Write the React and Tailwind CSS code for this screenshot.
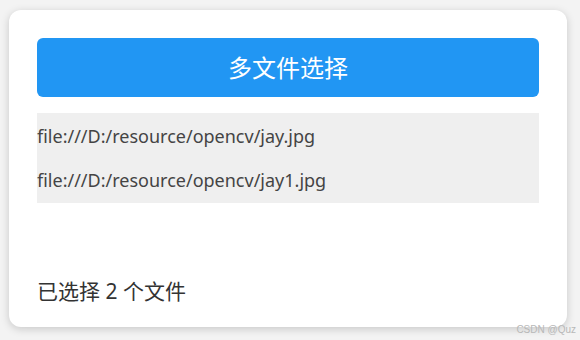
const files = [
  "file:///D:/resource/opencv/jay.jpg",
  "file:///D:/resource/opencv/jay1.jpg",
];

const App = () => {
  return (
    <div className="w-[580px] h-[340px] bg-[#f3f3f3] relative font-['Noto_Sans','Noto_Sans_CJK_SC',sans-serif] overflow-hidden">
      <div className="pl-[9px] pt-[10px]">
        <div className="w-[558px] h-[317px] bg-white rounded-[12px] shadow-[0_2px_8px_rgba(0,0,0,0.18)] px-[28px] pt-[28px] flex flex-col">
          {/* Button */}
          <button className="h-[59px] w-full rounded-[6px] bg-[#2196f3] text-white text-[24px] flex items-center justify-center">
            多文件选择
          </button>

          {/* File list */}
          <div className="mt-[16px] bg-[#efefef] py-[1px]">
            {files.map((f) => (
              <div key={f} className="h-[44px] flex items-center text-[18px] text-[#444]">
                {f}
              </div>
            ))}
          </div>

          {/* Footer */}
          <p className="mt-auto pb-[21px] text-[21px] leading-[30px] text-[#333]">
            已选择 2 个文件
          </p>
        </div>
      </div>

      {/* watermark */}
      <span className="absolute right-[4px] bottom-[3px] text-[10px] text-[#b8b8b8] font-['Liberation_Sans',sans-serif]">
        CSDN @Quz
      </span>
    </div>
  );
};

export default App;
